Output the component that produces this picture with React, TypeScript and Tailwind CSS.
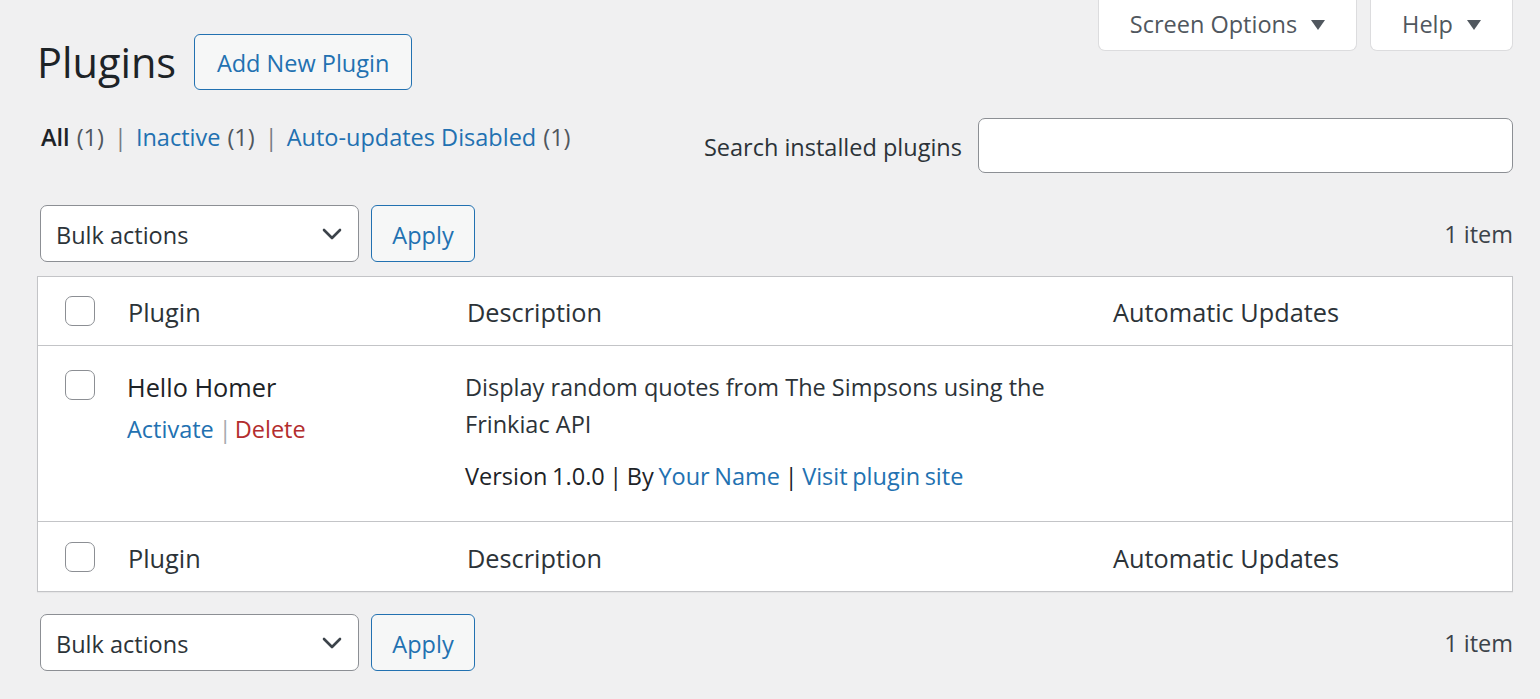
function Triangle() {
  return (
    <svg width="14" height="10" viewBox="0 0 14 10" className="ml-[14px]">
      <polygon points="0,0 14,0 7,10" fill="#50575e" />
    </svg>
  );
}

function Chevron() {
  return (
    <svg width="20" height="12" viewBox="0 0 20 12">
      <polyline points="2,2 10,10 18,2" fill="none" stroke="#3c434a" strokeWidth="2.6" strokeLinecap="round" strokeLinejoin="round" />
    </svg>
  );
}

function Checkbox() {
  return <div className="w-[30px] h-[30px] border-[1.5px] border-[#8c8f94] rounded-[7px] bg-white shrink-0" />;
}

function TableNav() {
  return (
    <div className="flex items-center justify-between h-[57px]">
      <div className="flex items-center gap-[12px] ml-[3px]">
        <div className="w-[319px] h-[57px] border-[1.5px] border-[#8c8f94] rounded-[7px] bg-white flex items-center justify-between pl-[15px] pr-[16px] text-[#2c3338]">
          <span className="pt-[4px]">Bulk actions</span>
          <Chevron />
        </div>
        <div className="w-[104px] h-[57px] border-[1.5px] border-[#2271b1] rounded-[6px] bg-[#f6f7f7] flex items-center justify-center text-[#2271b1]">
          <span className="pt-[3px]">Apply</span>
        </div>
      </div>
      <div className="text-[#3c434a] pt-[2px]">1 item</div>
    </div>
  );
}

function HeaderRow({ bottom }: { bottom?: boolean }) {
  return (
    <div className={`flex items-center h-[69px] text-[#2c3338] text-[25.3px] ${bottom ? '' : 'border-b border-[#c3c4c7]'}`}>
      <div className="w-[73px] pl-[27px] shrink-0">
        <Checkbox />
      </div>
      <div className={`w-[339px] pl-[17px] shrink-0 ${bottom ? 'pt-[4px]' : 'pt-[3px]'}`}>Plugin</div>
      <div className={`w-[646px] pl-[17px] shrink-0 ${bottom ? 'pt-[4px]' : 'pt-[3px]'}`}>Description</div>
      <div className={`flex-1 pl-[17px] ${bottom ? 'pt-[4px]' : 'pt-[3px]'}`}>Automatic Updates</div>
    </div>
  );
}

export default function App() {
  return (
    <div
      className="min-h-[699px] bg-[#f0f0f1] pl-[37px] pr-[27px] text-[23.5px] leading-[37px] text-[#1d2327] overflow-hidden"
      style={{ fontFamily: '"Open Sans", sans-serif' }}
    >
      {/* Title row */}
      <div className="flex justify-between items-start">
        <div className="flex items-center mt-[34px] h-[56px]">
          <h1 className="text-[41.5px] leading-none font-normal text-[#1d2327] pt-[2px]">Plugins</h1>
          <div className="ml-[18px] w-[218px] h-[56px] border-[1.5px] border-[#2271b1] rounded-[6px] bg-[#f6f7f7] flex items-center justify-center text-[#2271b1]">
            <span className="pt-[2px]">Add New Plugin</span>
          </div>
        </div>
        <div className="flex gap-[13px] -mt-[10px]">
          <div className="w-[259px] h-[61px] bg-white border-[1.5px] border-t-0 border-[#dcdcde] rounded-b-[7px] flex items-end justify-center pb-[7px] text-[#50575e]">
            <span className="flex items-center">
              Screen Options
              <Triangle />
            </span>
          </div>
          <div className="w-[143px] h-[61px] bg-white border-[1.5px] border-t-0 border-[#dcdcde] rounded-b-[7px] flex items-end justify-center pb-[7px] text-[#50575e]">
            <span className="flex items-center">
              Help
              <Triangle />
            </span>
          </div>
        </div>
      </div>

      {/* Filters + search */}
      <div className="flex justify-between items-start mt-[28px]">
        <div className="pt-[1px] pl-[4px] flex items-center text-[#50575e] leading-[37px]">
          <span className="font-semibold text-[#1d2327]">All</span>
          <span className="ml-[7px]">(1)</span>
          <span className="ml-[10px] mr-[9px] text-[#787c82]">|</span>
          <span className="text-[#2271b1]">Inactive</span>
          <span className="ml-[7px]">(1)</span>
          <span className="ml-[10px] mr-[9px] text-[#787c82]">|</span>
          <span className="text-[#2271b1]">Auto-updates Disabled</span>
          <span className="ml-[7px]">(1)</span>
        </div>
        <div className="flex items-center">
          <span className="text-[#2c3338] pt-[3px]">Search installed plugins</span>
          <div className="ml-[16px] w-[535px] h-[55px] border-[1.5px] border-[#8c8f94] rounded-[7px] bg-white" />
        </div>
      </div>

      {/* Top tablenav */}
      <div className="mt-[32px]">
        <TableNav />
      </div>

      {/* Table */}
      <div className="mt-[14px] bg-white border-[1.5px] border-[#c3c4c7] shadow-[0_1px_1px_rgba(0,0,0,0.04)]">
        <HeaderRow />
        <div className="flex items-start h-[176px] border-b border-[#c3c4c7]">
          <div className="w-[73px] pl-[27px] pt-[24px] shrink-0">
            <Checkbox />
          </div>
          <div className="w-[339px] pl-[16px] pt-[23px] shrink-0">
            <div className="text-[#1d2327] text-[25.3px]">Hello Homer</div>
            <div className="mt-[5px]">
              <span className="text-[#2271b1]">Activate</span>
              <span className="ml-[5px] mr-[3px] text-[#a7aaad]">|</span>
              <span className="text-[#b32d2e]">Delete</span>
            </div>
          </div>
          <div className="w-[646px] pl-[15px] pr-[16px] pt-[23px] shrink-0">
            <p className="text-[#2c3338]">Display random quotes from The Simpsons using the Frinkiac API</p>
            <div className="mt-[15px] text-[#1d2327] [word-spacing:-1.5px]">
              Version 1.0.0 | By <span className="text-[#2271b1]">Your Name</span> |{' '}
              <span className="text-[#2271b1]">Visit plugin site</span>
            </div>
          </div>
          <div className="flex-1" />
        </div>
        <HeaderRow bottom />
      </div>

      {/* Bottom tablenav */}
      <div className="mt-[22px]">
        <TableNav />
      </div>
    </div>
  );
}
